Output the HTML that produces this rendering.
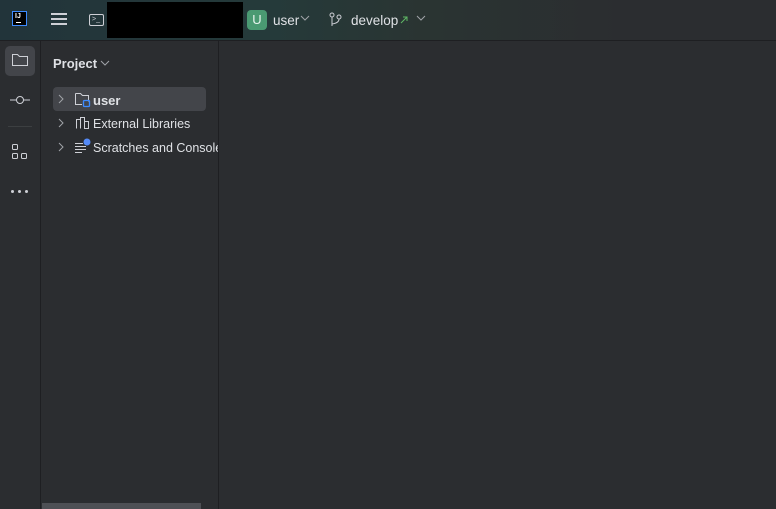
<!DOCTYPE html><html><head><style>
body{margin:0;width:776px;height:509px;background:#2b2d30;font-family:"Liberation Sans",sans-serif;position:relative;overflow:hidden;color:#dfe1e5}
.hdr{position:absolute;left:0;top:0;width:776px;height:40px;background:linear-gradient(90deg,#22343a 0%,#253a3a 35%,#2a3432 55%,#2b2d30 80%);border-bottom:1px solid #1e1f22}
.a{position:absolute}
.vl{position:absolute;top:41px;bottom:0;width:1px;background:#1e1f22}
.t{position:absolute;font-size:13px;color:#dfe1e5}
</style></head><body>
<div class="hdr"></div>
<div class="a" style="left:12px;top:11px;width:15px;height:15px;background:#000;border:1px solid #3d8bff;box-sizing:border-box"><div class="a" style="left:2px;top:1px;font-size:7px;color:#fff;font-weight:bold">IJ</div><div class="a" style="left:3px;top:10px;width:5px;height:1px;background:#fff"></div></div>
<div class="a" style="left:51px;top:13px;width:16px;height:2px;background:#ced0d6;box-shadow:0 5px 0 #ced0d6,0 10px 0 #ced0d6"></div>
<div class="a" style="left:89px;top:14px;width:13px;height:10px;border:1px solid #ced0d6;border-radius:2px"><div class="a" style="left:2px;top:1px;font-size:7px;color:#ced0d6">&gt;_</div></div>
<div class="a" style="left:107px;top:2px;width:136px;height:36px;background:#000"></div>
<div class="a" style="left:247px;top:10px;width:20px;height:20px;background:#4a9a72;border-radius:4px;color:#e8f5ee;font-size:13px;text-align:center;line-height:20px">U</div>
<div class="t" style="left:273px;top:13px;font-size:13.5px">user</div>
<svg class="a" style="left:300px;top:14px" width="10" height="8"><path d="M1 2l4 4 4-4" stroke="#a0a3a8" fill="none"/></svg>
<svg class="a" style="left:329px;top:12px" width="14" height="16"><circle cx="3" cy="3" r="2" stroke="#ced0d6" fill="none"/><circle cx="10" cy="5" r="2" stroke="#ced0d6" fill="none"/><path d="M3 5v9M10 7q0 4-7 5" stroke="#ced0d6" fill="none"/></svg>
<div class="t" style="left:351px;top:13px;font-size:13.5px">develop</div>
<svg class="a" style="left:400px;top:15px" width="9" height="9"><path d="M1 8l6-6M3 2h4v4" stroke="#5fb865" fill="none"/></svg>
<svg class="a" style="left:416px;top:14px" width="10" height="8"><path d="M1 2l4 4 4-4" stroke="#a0a3a8" fill="none"/></svg>
<div class="vl" style="left:40px"></div><div class="vl" style="left:218px"></div>
<div class="a" style="left:5px;top:46px;width:30px;height:30px;background:#43454a;border-radius:5px"></div>
<svg class="a" style="left:11px;top:52px" width="18" height="16"><path d="M1.5 2.5h5l2 2h8v9h-15z" stroke="#ced0d6" fill="none"/></svg>
<svg class="a" style="left:9px;top:94px" width="22" height="12"><circle cx="11" cy="6" r="3.5" stroke="#ced0d6" fill="none"/><path d="M1 6h6.5M14.5 6H21" stroke="#ced0d6"/></svg>
<div class="a" style="left:8px;top:126px;width:24px;height:1px;background:#3c3f41"></div>
<svg class="a" style="left:11px;top:143px" width="18" height="18"><rect x="1.5" y="1.5" width="5" height="5" rx="1" stroke="#ced0d6" fill="none"/><rect x="1.5" y="10.5" width="5" height="5" rx="1" stroke="#ced0d6" fill="none"/><rect x="10.5" y="10.5" width="5" height="5" rx="1" stroke="#ced0d6" fill="none"/></svg>
<div class="a" style="left:11px;top:190px;width:3px;height:3px;background:#ced0d6;border-radius:2px;box-shadow:7px 0 0 #ced0d6,14px 0 0 #ced0d6"></div>
<div class="t" style="left:53px;top:56px;font-weight:bold;font-size:13px">Project</div>
<svg class="a" style="left:100px;top:59px" width="10" height="8"><path d="M1 2l4 4 4-4" stroke="#a0a3a8" fill="none"/></svg>
<div class="a" style="left:53px;top:87px;width:153px;height:24px;background:#43454a;border-radius:4px"></div>
<svg class="a" style="left:57px;top:94px" width="8" height="10"><path d="M2 1l4 4-4 4" stroke="#a0a3a8" fill="none"/></svg>
<svg class="a" style="left:57px;top:118px" width="8" height="10"><path d="M2 1l4 4-4 4" stroke="#a0a3a8" fill="none"/></svg>
<svg class="a" style="left:57px;top:142px" width="8" height="10"><path d="M2 1l4 4-4 4" stroke="#a0a3a8" fill="none"/></svg>
<svg class="a" style="left:74px;top:91px" width="18" height="17"><path d="M1.5 2.5h5l2 2h6v6M8 13.5H1.5v-11" stroke="#ced0d6" fill="none"/><rect x="9.5" y="9.5" width="6" height="6" rx="1" stroke="#3d8bff" fill="none" stroke-width="1.3"/></svg>
<div class="t" style="left:93px;top:93px;font-weight:bold;font-size:13px">user</div>
<svg class="a" style="left:75px;top:116px" width="15" height="14"><path d="M1.5 12.5v-9h4v9M5.5 12.5v-11h4v11M9.5 12.5v-7h4v7z" stroke="#ced0d6" fill="none"/></svg>
<div class="t" style="left:93px;top:117px;font-size:12.5px">External Libraries</div>
<svg class="a" style="left:75px;top:138px" width="17" height="15"><path d="M0 5.5h8M0 8.5h11M0 11.5h11M0 14.5h7" stroke="#ced0d6"/><circle cx="12" cy="4" r="3.5" fill="#548af7"/></svg>
<div class="t" style="left:93px;top:141px;font-size:12.5px;white-space:nowrap;width:125px;overflow:hidden">Scratches and Consoles</div>
<div class="a" style="left:42px;top:503px;width:159px;height:6px;background:#4e5055"></div>
</body></html>
